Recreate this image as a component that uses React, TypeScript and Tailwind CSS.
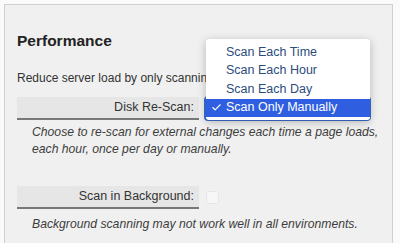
import { Check } from 'lucide-react';

const options = ['Scan Each Time', 'Scan Each Hour', 'Scan Each Day', 'Scan Only Manually'];

function FieldLabel({ children }: { children: string }) {
  return (
    <div className="w-[182px] h-[23px] bg-[#e6e6e6] border-b-2 border-[#777] flex items-center justify-end pr-[5px] text-[12.5px] text-[#333]">
      {children}
    </div>
  );
}

export default function App() {
  return (
    <div
      className="w-[400px] h-[243px] bg-[#fafafa] overflow-hidden pt-[4px] pl-[4px]"
      style={{ fontFamily: '"Liberation Sans", Arial, sans-serif' }}
    >
      <div className="relative w-[389px] h-[260px] bg-[#f0f0f0] border border-[#d0d0d0] pl-[12px] pt-[27px]">
        <h2 className="text-[15.5px] font-bold text-[#222] leading-[18px]">Performance</h2>

        <p className="mt-[21px] w-[189px] overflow-hidden whitespace-nowrap text-[12px] text-[#333] leading-[14px]">
          Reduce server load by only scanning when needed.
        </p>

        {/* Disk re-scan row */}
        <div className="mt-[11px] flex items-center">
          <FieldLabel>Disk Re-Scan:</FieldLabel>
          <div className="ml-[5px] w-[167px] h-[25px] border-2 border-[#3b6fd4] rounded-[4px] bg-white" />
        </div>
        <p className="mt-[3px] pl-[15px] text-[12.2px] italic text-[#3d3d3d] leading-[17px]">
          Choose to re-scan for external changes each time a page loads,
          <br />
          each hour, once per day or manually.
        </p>

        {/* Scan in background row */}
        <div className="mt-[28px] flex items-center">
          <FieldLabel>Scan in Background:</FieldLabel>
          <div className="ml-[7px] w-[13px] h-[13px] rounded-[3px] bg-[#f7f7f7] border border-[#e6e6e6]" />
        </div>
        <p className="mt-[7px] pl-[15px] text-[12.2px] italic text-[#3d3d3d] leading-[17px]">
          Background scanning may not work well in all environments.
        </p>

        {/* Open dropdown menu */}
        <div className="absolute left-[201px] top-[34px] w-[164px] bg-white rounded-[3px] shadow-[0_2px_8px_rgba(0,0,0,0.25)] pt-[4px] pb-[3px]">
          {options.map((opt, i) => {
            const selected = i === options.length - 1;
            return (
              <div
                key={opt}
                className={`h-[18.5px] flex items-center text-[12.5px] leading-[15px] ${
                  selected ? 'bg-[#2f5fe0] text-white' : 'text-[#2c4d7c]'
                }`}
              >
                <span className="w-[20px] flex justify-center">
                  {selected && <Check className="w-[11px] h-[11px]" strokeWidth={2.5} />}
                </span>
                {opt}
              </div>
            );
          })}
        </div>
      </div>
    </div>
  );
}
